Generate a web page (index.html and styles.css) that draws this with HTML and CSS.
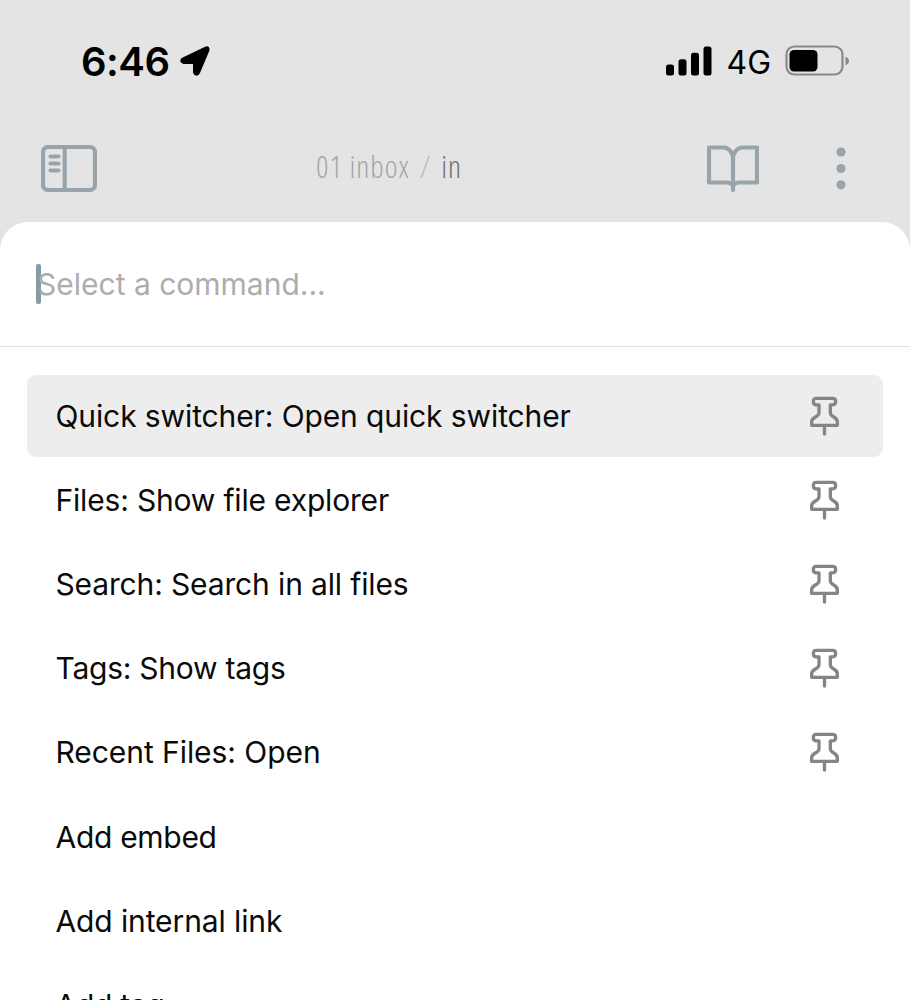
FILE: index.html
```html
<!DOCTYPE html>
<html lang="en">
<head>
    <meta charset="UTF-8">
    <meta name="viewport" content="width=device-width, initial-scale=1.0">
    <title>Command palette</title>
    <link rel="stylesheet" href="styles.css">
</head>
<body>
    <svg class="symbols" width="0" height="0">
        <symbol id="pin" viewBox="90 93 90 120">
            <path d="M109 100H158Q167 100 167 109.500T158 119.500H151V143C151 157 172 155 172 170V181H95V170C95 155 117 157 117 143V119.500H109Q100 119.500 100 109.500T109 100ZM133.500 183V207"/>
        </symbol>
    </svg>
    <header class="status-bar">
        <div class="clock">
            <span class="time">6:46</span>
            <svg class="location" width="32" height="32" viewBox="0 0 32 32">
                <path d="M4 14.500L27 3.500Q29 2.500 28.500 5L19 27.500Q17 30 16 27V17H5Q2 16.500 4 14.500Z" fill="#000" stroke="#000" stroke-width="4" stroke-linejoin="round"/>
            </svg>
        </div>
        <div class="indicators">
            <svg class="signal" width="46" height="30" viewBox="0 0 46 30">
                <rect x="0" y="18.500" width="8" height="11" rx="2.500"/>
                <rect x="12.500" y="13.200" width="8" height="16.300" rx="2.500"/>
                <rect x="25" y="6.800" width="8" height="22.700" rx="2.500"/>
                <rect x="37.500" y="0.500" width="8" height="29" rx="2.500"/>
            </svg>
            <span class="network">4G</span>
            <svg class="battery" width="65" height="32" viewBox="0 0 65 32">
                <rect x="1.500" y="1.500" width="56" height="28" rx="8" fill="none" stroke="#898989" stroke-width="2.200"/>
                <rect x="4.500" y="5" width="28" height="21.500" rx="4.500"/>
                <path d="M60.500 11.500Q64 13.500 64 16T60.500 20.500Z" fill="#898989"/>
            </svg>
        </div>
    </header>
    <nav class="toolbar">
        <svg class="icon" width="56" height="48" viewBox="0 0 56 48">
            <rect x="2" y="2" width="52" height="43" rx="5"/>
            <path d="M23.700 2V45M9.500 11.500H17.500M9.500 18.500H17.500M9.500 25.500H17.500"/>
        </svg>
        <div class="breadcrumb">
            <span>01 inbox</span>
            <span class="slash">/</span>
            <span class="current">in</span>
        </div>
        <svg class="icon book" width="52" height="48" viewBox="0 0 52 48">
            <path d="M26 11C24 5 21 2.500 16 2.500H2V37.500H20Q25 37.500 26 42Q27 37.500 32 37.500H50V2.500H36C31 2.500 28 5 26 11ZM26 9V45"/>
        </svg>
        <svg class="dots" width="10" height="44" viewBox="0 0 10 44">
            <circle cx="5" cy="5" r="4.600"/>
            <circle cx="5" cy="21.500" r="4.600"/>
            <circle cx="5" cy="37.800" r="4.600"/>
        </svg>
    </nav>
    <main class="prompt">
        <div class="prompt-input">
            <span class="caret"></span>
            <span class="placeholder">Select a command...</span>
        </div>
        <ul class="results">
            <li class="item selected"><span>Quick switcher: Open quick switcher</span><svg class="pin"><use href="#pin"/></svg></li>
            <li class="item"><span class="files">Files: Show file explorer</span><svg class="pin"><use href="#pin"/></svg></li>
            <li class="item"><span class="search">Search: Search in all files</span><svg class="pin"><use href="#pin"/></svg></li>
            <li class="item"><span class="tags">Tags: Show tags</span><svg class="pin"><use href="#pin"/></svg></li>
            <li class="item"><span class="recent">Recent Files: Open</span><svg class="pin"><use href="#pin"/></svg></li>
            <li class="item"><span class="embed">Add embed</span></li>
            <li class="item"><span>Add internal link</span></li>
            <li class="item"><span class="embed">Add tag</span></li>
        </ul>
    </main>
</body>
</html>
```
FILE: styles.css
```css
* {
    box-sizing: border-box;
}
body {
    margin: 0;
    height: 1000px;
    overflow: hidden;
    display: flex;
    flex-direction: column;
    background-color: #e4e4e4;
    font-family: Inter, "Liberation Sans", sans-serif;
    color: #0a0a0a;
}
.symbols {
    position: absolute;
}
.status-bar {
    height: 122px;
    flex: none;
    display: flex;
    justify-content: space-between;
    padding: 0 60px 0 81px;
    color: #000;
}
.clock, .indicators {
    display: flex;
    align-items: center;
    height: 122px;
}
.time {
    font-size: 40px;
    font-weight: 600;
    letter-spacing: -0.5px;
}
.location {
    margin-left: 9px;
}
.network {
    font-size: 32px;
    margin: 2px 14px 0;
}
.toolbar {
    height: 100px;
    flex: none;
    display: flex;
    align-items: center;
    padding: 0 64px 6px 41px;
}
.icon {
    fill: none;
    stroke: #98a4aa;
    stroke-width: 4.2;
    stroke-linecap: round;
    stroke-linejoin: round;
}
.breadcrumb {
    flex: 1;
    display: flex;
    align-items: center;
    padding: 0 0 7px 219px;
    font-family: "Open Sans", sans-serif;
    font-size: 30.5px;
    font-weight: 330;
    font-stretch: 75%;
    letter-spacing: 1px;
    white-space: nowrap;
    color: #a5a5a5;
}
.slash {
    margin: 0 10px;
    color: #bbb;
}
.current {
    color: #707070;
}
.book {
    margin-right: 77px;
}
.dots {
    fill: #98a4aa;
}
.prompt {
    flex: 1;
    min-height: 0;
    background-color: #fff;
    border-radius: 28px 28px 0 0;
    overflow: hidden;
}
.prompt-input {
    position: relative;
    height: 125px;
    display: flex;
    align-items: center;
    padding-left: 37px;
    border-bottom: 1px solid #e2e2e2;
    font-size: 30px;
    color: #adadad;
}
.caret {
    position: absolute;
    left: 36px;
    top: 42px;
    width: 5px;
    height: 40px;
    border-radius: 2px;
    background-color: #8799a5;
}
.placeholder {
    position: relative;
}
.results {
    display: flex;
    flex-direction: column;
    gap: 2.12px;
    list-style: none;
    margin: 0;
    padding: 28px 27px 0;
}
.item {
    height: 82px;
    flex: none;
    display: flex;
    align-items: center;
    justify-content: space-between;
    padding: 0 43px 0 28.5px;
    border-radius: 9px;
    font-size: 30px;
    letter-spacing: -0.11px;
}
.selected {
    background-color: #ededed;
}
.files {
    letter-spacing: -0.18px;
}
.search {
    letter-spacing: -0.14px;
}
.tags {
    letter-spacing: -0.25px;
}
.recent {
    letter-spacing: -0.06px;
}
.embed {
    letter-spacing: -0.3px;
}
.pin {
    width: 30px;
    height: 40px;
    fill: none;
    stroke: #858585;
    stroke-width: 10;
    stroke-linecap: round;
    stroke-linejoin: round;
}
```
